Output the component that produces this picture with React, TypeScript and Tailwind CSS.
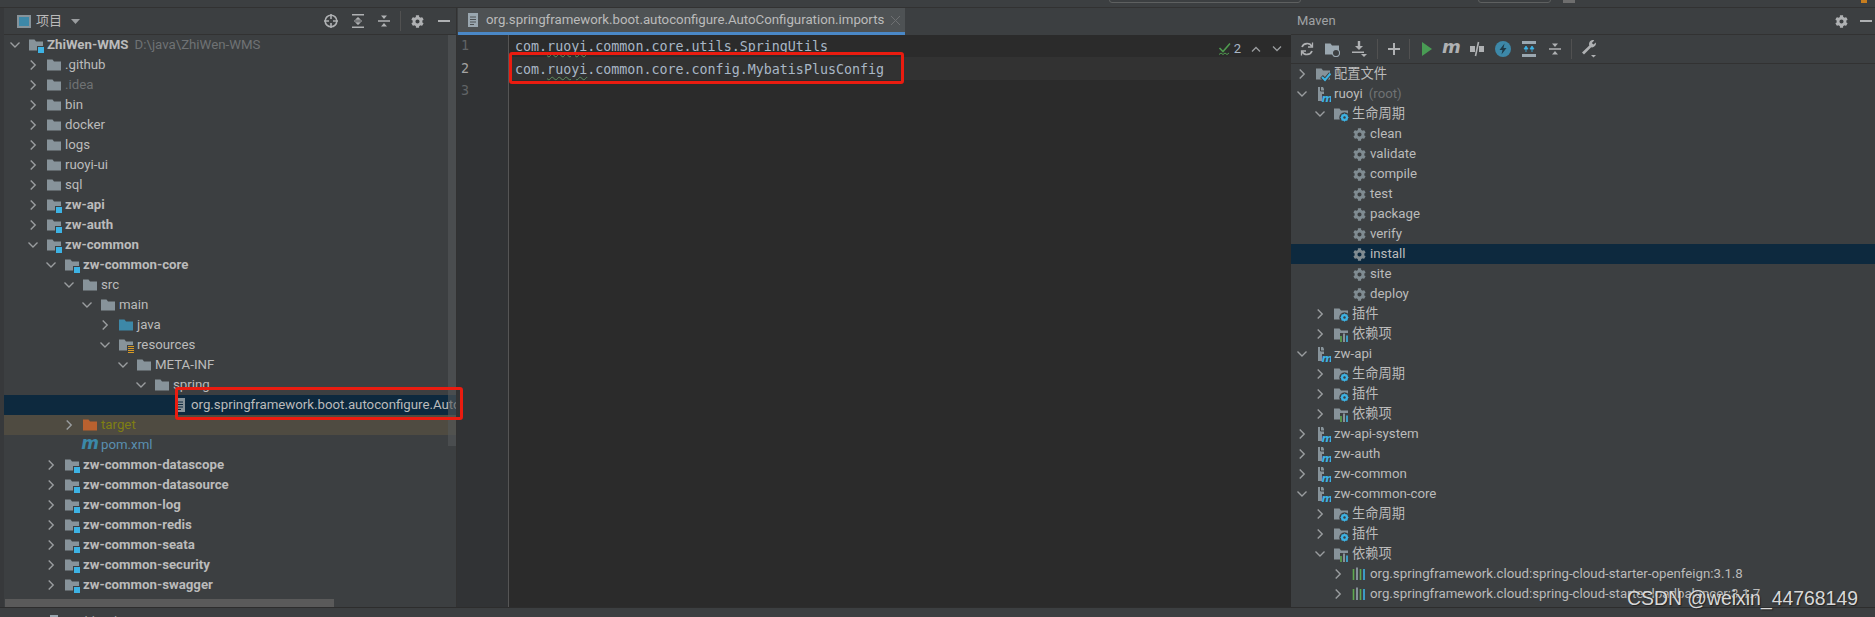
import React from "react";
import { FaCog } from "react-icons/fa";

const UI_FONT = "font-['Roboto','Noto_Sans_CJK_SC',sans-serif]";

type IconKind =
  | "folder" | "module" | "java" | "resources" | "target" | "file" | "pom"
  | "profiles" | "mvn" | "lifecycle" | "deps" | "task" | "lib";

type Row = {
  label: string;
  depth: number;
  icon: IconKind;
  open?: boolean;
  leaf?: boolean;
  bold?: boolean;
  hint?: string;
  tone?: string;
  rowBg?: string;
};

const projectRows: Row[] = [
  { label: "ZhiWen-WMS", depth: 0, icon: "module", open: true, bold: true, hint: "D:\\java\\ZhiWen-WMS" },
  { label: ".github", depth: 1, icon: "folder" },
  { label: ".idea", depth: 1, icon: "folder", tone: "text-[#6f7274]" },
  { label: "bin", depth: 1, icon: "folder" },
  { label: "docker", depth: 1, icon: "folder" },
  { label: "logs", depth: 1, icon: "folder" },
  { label: "ruoyi-ui", depth: 1, icon: "folder" },
  { label: "sql", depth: 1, icon: "folder" },
  { label: "zw-api", depth: 1, icon: "module", bold: true },
  { label: "zw-auth", depth: 1, icon: "module", bold: true },
  { label: "zw-common", depth: 1, icon: "module", open: true, bold: true },
  { label: "zw-common-core", depth: 2, icon: "module", open: true, bold: true },
  { label: "src", depth: 3, icon: "folder", open: true },
  { label: "main", depth: 4, icon: "folder", open: true },
  { label: "java", depth: 5, icon: "java" },
  { label: "resources", depth: 5, icon: "resources", open: true },
  { label: "META-INF", depth: 6, icon: "folder", open: true },
  { label: "spring", depth: 7, icon: "folder", open: true },
  { label: "org.springframework.boot.autoconfigure.AutoConfiguration.imports", depth: 8, icon: "file", leaf: true, rowBg: "bg-[#0d293e]" },
  { label: "target", depth: 3, icon: "target", tone: "text-[#7f7f13]", rowBg: "bg-[#4f4b41]" },
  { label: "pom.xml", depth: 3, icon: "pom", leaf: true, tone: "text-[#5a8fb0]" },
  { label: "zw-common-datascope", depth: 2, icon: "module", bold: true },
  { label: "zw-common-datasource", depth: 2, icon: "module", bold: true },
  { label: "zw-common-log", depth: 2, icon: "module", bold: true },
  { label: "zw-common-redis", depth: 2, icon: "module", bold: true },
  { label: "zw-common-seata", depth: 2, icon: "module", bold: true },
  { label: "zw-common-security", depth: 2, icon: "module", bold: true },
  { label: "zw-common-swagger", depth: 2, icon: "module", bold: true },
  { label: "pom.xml", depth: 2, icon: "pom", leaf: true, tone: "text-[#5a8fb0]" },
];

const task = (label: string, rowBg?: string): Row => ({ label, depth: 2, icon: "task", leaf: true, rowBg });

const mavenRows: Row[] = [
  { label: "配置文件", depth: 0, icon: "profiles" },
  { label: "ruoyi", depth: 0, icon: "mvn", open: true, hint: "(root)" },
  { label: "生命周期", depth: 1, icon: "lifecycle", open: true },
  task("clean"), task("validate"), task("compile"), task("test"), task("package"), task("verify"),
  task("install", "bg-[#0d293e]"), task("site"), task("deploy"),
  { label: "插件", depth: 1, icon: "lifecycle" },
  { label: "依赖项", depth: 1, icon: "deps" },
  { label: "zw-api", depth: 0, icon: "mvn", open: true },
  { label: "生命周期", depth: 1, icon: "lifecycle" },
  { label: "插件", depth: 1, icon: "lifecycle" },
  { label: "依赖项", depth: 1, icon: "deps" },
  { label: "zw-api-system", depth: 0, icon: "mvn" },
  { label: "zw-auth", depth: 0, icon: "mvn" },
  { label: "zw-common", depth: 0, icon: "mvn" },
  { label: "zw-common-core", depth: 0, icon: "mvn", open: true },
  { label: "生命周期", depth: 1, icon: "lifecycle" },
  { label: "插件", depth: 1, icon: "lifecycle" },
  { label: "依赖项", depth: 1, icon: "deps", open: true },
  { label: "org.springframework.cloud:spring-cloud-starter-openfeign:3.1.8", depth: 2, icon: "lib" },
  { label: "org.springframework.cloud:spring-cloud-starter-loadbalancer:3.1.7", depth: 2, icon: "lib" },
];

const FOLDER = "M1 2.5H6.5L8 4.5H15V13.5H1Z";

function Chevron({ open }: { open?: boolean }) {
  return (
    <svg width="12" height="12" viewBox="0 0 12 12" fill="none" stroke="#9a9d9f" strokeWidth="1.4" className="shrink-0">
      {open ? <path d="M1.5 3.5L6 8L10.5 3.5" /> : <path d="M3.7 1.5L8.2 6L3.7 10.5" />}
    </svg>
  );
}

function TreeIcon({ kind }: { kind: IconKind }) {
  if (kind === "task") return <FaCog size={13} className="text-[#7f8b91]" />;
  if (kind === "pom") {
    return <span className="font-['DejaVu_Sans',sans-serif] text-[17px] leading-none font-bold italic text-[#3b88a8] -mt-1">m</span>;
  }
  return (
    <svg width="16" height="16" viewBox="0 0 16 16">
      {kind === "folder" && <path d={FOLDER} fill="#87939a" />}
      {kind === "java" && <path d={FOLDER} fill="#3d88a8" />}
      {kind === "target" && <path d={FOLDER} fill="#b9612f" />}
      {kind === "module" && (
        <>
          <path d={FOLDER} fill="#87939a" />
          <rect x="9" y="9" width="8" height="8" fill="#3c3f41" />
          <rect x="10" y="10" width="6" height="6" fill="#3db3e4" />
        </>
      )}
      {kind === "resources" && (
        <>
          <path d={FOLDER} fill="#87939a" />
          <rect x="9" y="8" width="8" height="8" fill="#3c3f41" />
          <path d="M10 9.5H16M10 11.5H16M10 13.5H16M10 15.5H16" stroke="#d79a26" strokeWidth="1" />
        </>
      )}
      {kind === "file" && (
        <>
          <path d="M3 1H13V15H3Z" fill="#87939a" />
          <path d="M5 5H11M5 7.5H11M5 10H11M5 12.5H9" stroke="#0d293e" strokeWidth="1" />
        </>
      )}
      {kind === "profiles" && (
        <>
          <path d={FOLDER} fill="#87939a" />
          <path d="M6.5 10.5L10 14L15.5 7.5" fill="none" stroke="#3c3f41" strokeWidth="4" />
          <path d="M7 11L10 14L15.5 7.5" fill="none" stroke="#3db3e4" strokeWidth="2" />
        </>
      )}
      {kind === "lifecycle" && (
        <>
          <path d={FOLDER} fill="#87939a" />
          <circle cx="11.5" cy="11.5" r="5.2" fill="#3c3f41" />
          <circle cx="11.5" cy="11.5" r="2.6" fill="none" stroke="#3db3e4" strokeWidth="2" />
          <path d="M11.5 7.5V15.5M7.5 11.5H15.5M8.7 8.7L14.3 14.3M14.3 8.7L8.7 14.3" stroke="#3db3e4" strokeWidth="1.1" />
          <circle cx="11.5" cy="11.5" r="1.2" fill="#3c3f41" />
        </>
      )}
      {kind === "deps" && (
        <>
          <path d={FOLDER} fill="#87939a" />
          <rect x="7" y="7" width="10" height="9" fill="#3c3f41" />
          <path d="M8 10V16" stroke="#5ea84f" strokeWidth="1.6" />
          <path d="M11 7.5V16" stroke="#9aa7b0" strokeWidth="1.6" />
          <path d="M14 9.5V16" stroke="#3db3e4" strokeWidth="1.6" />
        </>
      )}
      {kind === "lib" && (
        <>
          <path d="M2.5 3V14" stroke="#5ea84f" strokeWidth="1.6" />
          <path d="M6 1.5V14" stroke="#9aa7b0" strokeWidth="1.6" />
          <path d="M9.5 3V14" stroke="#5ea84f" strokeWidth="1.6" />
          <path d="M13 3V14" stroke="#3db3e4" strokeWidth="1.6" />
        </>
      )}
      {kind === "mvn" && (
        <>
          <path d="M3 1H8L9 3V9H8V15H3Z" fill="#87939a" />
          <path d="M5.5 1V5H9" fill="none" stroke="#3c3f41" strokeWidth="1" />
          <rect x="7" y="8" width="10" height="8" fill="#3c3f41" />
          <text x="6.5" y="15.5" fontSize="11" fontWeight="700" fontStyle="italic" fill="#3db3e4" fontFamily="DejaVu Sans">m</text>
        </>
      )}
    </svg>
  );
}

function TreeRow({ row }: { row: Row }) {
  const tone = row.tone ?? "text-[#bbbbbb]";
  return (
    <div
      className={`h-5 shrink-0 flex items-center whitespace-nowrap text-[13.25px] ${row.rowBg ?? ""}`}
      style={{ paddingLeft: 5 + row.depth * 18 }}
    >
      <span className="w-3 shrink-0">{!row.leaf && row.icon !== "task" && <Chevron open={row.open} />}</span>
      <span className="w-4 h-4 ml-[7px] mr-[3px] shrink-0 flex items-center justify-center">
        <TreeIcon kind={row.icon} />
      </span>
      <span className={`${tone} ${row.bold ? "font-bold" : ""}`}>{row.label}</span>
      {row.hint && <span className="ml-[6px] text-[#6f7274]">{row.hint}</span>}
    </div>
  );
}

function ToolSep() {
  return <span className="block w-px h-[20px] bg-[#515151] shrink-0" />;
}

function Minus() {
  return <span className="block w-3 h-[2px] bg-[#afb1b3] shrink-0" />;
}

function ExpandIcon() {
  return (
    <svg width="14" height="14" viewBox="0 0 14 14" fill="#afb1b3">
      <path d="M1 0H13V1.5H1ZM1 12.5H13V14H1ZM7 3L10 5.8H4ZM7 11L4 8.2H10ZM3 6.4H11V7.6H3Z" />
    </svg>
  );
}

function CollapseIcon() {
  return (
    <svg width="14" height="14" viewBox="0 0 14 14" fill="#afb1b3">
      <path d="M1 6.3H13V7.7H1ZM7 5L4 1.5H10ZM7 9L10 12.5H4Z" />
    </svg>
  );
}

function ProjectHeader() {
  return (
    <div className="h-[27px] shrink-0 flex items-center border-b border-[#323232] pl-[13px] pr-[6px]">
      <span className="w-[14px] h-[13px] border-2 border-[#87939a] bg-[#3d88a8] shrink-0" />
      <span className="ml-[5px] text-[13px] text-[#bbbbbb]">项目</span>
      <svg width="9" height="5" viewBox="0 0 9 5" className="ml-[9px]" fill="#9a9d9f"><path d="M0 0H9L4.5 5Z" /></svg>
      <div className="ml-auto flex items-center">
        <svg width="14" height="14" viewBox="0 0 14 14" fill="none" stroke="#afb1b3" strokeWidth="1.6">
          <circle cx="7" cy="7" r="5.8" />
          <path d="M7 0V5M7 9V14M0 7H5M9 7H14" />
        </svg>
        <span className="ml-[13px] flex"><ExpandIcon /></span>
        <span className="ml-[12px] flex"><CollapseIcon /></span>
        <span className="ml-[9px]"><ToolSep /></span>
        <FaCog size={13} className="ml-[10px] text-[#afb1b3]" />
        <span className="ml-[14px]"><Minus /></span>
      </div>
    </div>
  );
}

function CodeLine({ n, active, children }: { n: number; active?: boolean; children?: React.ReactNode }) {
  return (
    <div className={`h-[22.4px] flex items-center ${active ? "bg-[#323232]" : ""}`}>
      <span className={`w-[52px] h-full flex items-center pl-[4px] shrink-0 bg-[#313335] border-r border-[#555555] ${active ? "text-[#a4a3a3]" : "text-[#606366]"}`}>
        {n}
      </span>
      <span className="pl-[6px] pt-[2px] text-[#a9b7c6] whitespace-pre">{children}</span>
    </div>
  );
}

function Ruoyi() {
  return <span className="underline decoration-wavy decoration-[#5f8f5f] decoration-1 underline-offset-2">ruoyi</span>;
}

function Editor() {
  return (
    <section className="w-[834px] shrink-0 flex flex-col bg-[#2b2b2b] relative">
      <div className="h-[27px] shrink-0 bg-[#3c3f41] flex pl-px">
        <div className="w-[447px] h-full flex items-center bg-[#4e5254] border-b-[3px] border-[#4a88c7]">
          <svg width="12" height="14" viewBox="0 0 12 14" className="ml-[9px] shrink-0">
            <path d="M1 0H11V14H1Z" fill="#9aa7b0" />
            <path d="M3 4H9M3 6.5H9M3 9H9M3 11.5H7" stroke="#4e5254" strokeWidth="1" />
          </svg>
          <span className="ml-[7px] text-[13.25px] text-[#bbbbbb] whitespace-nowrap">
            org.springframework.boot.autoconfigure.AutoConfiguration.imports
          </span>
          <svg width="9" height="9" viewBox="0 0 9 9" className="ml-[7px] shrink-0" stroke="#6e7072" strokeWidth="1"><path d="M0 0L9 9M9 0L0 9" /></svg>
        </div>
      </div>
      <div className="flex-1 relative font-['DejaVu_Sans_Mono',monospace] text-[13.33px]">
        <div className="absolute left-0 top-0 bottom-0 w-[52px] bg-[#313335] border-r border-[#555555]" />
        <div className="relative">
          <CodeLine n={1}>com.<Ruoyi />.common.core.utils.SpringUtils</CodeLine>
          <CodeLine n={2} active>com.<Ruoyi />.common.core.config.MybatisPlusConfig</CodeLine>
          <CodeLine n={3} />
        </div>
        <div className="absolute top-[4px] right-[9px] flex items-center text-[13px] text-[#a9b7c6] font-['Roboto',sans-serif]">
          <svg width="14" height="14" viewBox="0 0 14 14" fill="none" stroke="#4f9a4f" strokeWidth="1.6">
            <path d="M1.5 6L5 9.5L12 1.5" />
            <path d="M1 12.5L3 11L5 12.5L7 11L9 12.5L11 11" strokeWidth="1" />
          </svg>
          <span className="ml-[2px]">2</span>
          <svg width="10" height="6" viewBox="0 0 10 6" className="ml-[10px]" fill="none" stroke="#9a9d9f" strokeWidth="1.3"><path d="M1 5.5L5 1.5L9 5.5" /></svg>
          <svg width="10" height="6" viewBox="0 0 10 6" className="ml-[11px]" fill="none" stroke="#9a9d9f" strokeWidth="1.3"><path d="M1 .5L5 4.5L9 .5" /></svg>
        </div>
      </div>
    </section>
  );
}

function MavenToolbar() {
  return (
    <div className="h-[29px] shrink-0 flex items-center border-b border-[#323232] pl-[3px]">
      <span className="w-[25px] flex justify-center">
        <svg width="14" height="14" viewBox="0 0 14 14" fill="none" stroke="#afb1b3" strokeWidth="1.7">
          <path d="M12 4.5A5.5 5.5 0 0 0 2 5M2 9.5A5.5 5.5 0 0 0 12 9" />
          <path d="M12.5 .5V5H8M1.5 13.5V9H6" strokeWidth="1.3" />
        </svg>
      </span>
      <span className="w-[26px] flex justify-center">
        <svg width="16" height="16" viewBox="0 0 16 16">
          <path d={FOLDER} fill="#9aa7b0" />
          <circle cx="12" cy="12" r="3.6" fill="#3c3f41" stroke="#9aa7b0" strokeWidth="1.2" />
        </svg>
      </span>
      <span className="w-[27px] flex justify-center">
        <svg width="16" height="16" viewBox="0 0 16 16" fill="#afb1b3">
          <path d="M6.8 0H9.2V5H12L8 9L4 5H6.8ZM1 10.5H13V12H1Z" />
          <path d="M10 13H16L13 16Z" />
        </svg>
      </span>
      <span className="ml-[5px]"><ToolSep /></span>
      <span className="w-[31px] flex justify-center text-[#afb1b3]">
        <svg width="12" height="12" viewBox="0 0 12 12" fill="#afb1b3"><path d="M5 0H7V5H12V7H7V12H5V7H0V5H5Z" /></svg>
      </span>
      <ToolSep />
      <span className="w-[33px] flex justify-center">
        <svg width="12" height="14" viewBox="0 0 12 14" fill="#499c54"><path d="M1 0L11 7L1 14Z" /></svg>
      </span>
      <span className="w-[18px] -ml-px text-center font-['DejaVu_Sans',sans-serif] text-[18px] leading-none font-bold italic text-[#afb1b3] -mt-1">m</span>
      <span className="w-[34px] flex justify-center">
        <svg width="16" height="16" viewBox="0 0 16 16" fill="#afb1b3">
          <rect x="1" y="5" width="5" height="6" />
          <rect x="10" y="5" width="5" height="6" />
          <path d="M6.5 15L9.5 1" stroke="#afb1b3" strokeWidth="1.6" />
        </svg>
      </span>
      <span className="w-[18px] flex justify-center">
        <svg width="16" height="16" viewBox="0 0 16 16" className="shrink-0">
          <circle cx="8" cy="8" r="8" fill="#3d88a8" />
          <path d="M9.5 2.5L4.5 9H7.5L6.5 13.5L11.5 7H8.5Z" fill="#1f3a47" />
        </svg>
      </span>
      <span className="w-[34px] flex justify-center">
        <svg width="14" height="16" viewBox="0 0 14 16">
          <path d="M0 0H14V3H0ZM0 13H14V16H0Z" fill="#9aa7b0" />
          <path d="M4 5L6 8H2ZM4 8V11M10 5L12 8H8ZM10 8V11" fill="#3db3e4" stroke="#3db3e4" strokeWidth=".8" />
        </svg>
      </span>
      <span className="w-[18px] flex justify-center"><CollapseIcon /></span>
      <span className="ml-[7px]"><ToolSep /></span>
      <span className="ml-[9px] flex">
        <svg width="16" height="18" viewBox="0 0 16 18" fill="#afb1b3">
          <path d="M12.5 0A4 4 0 0 0 8.3 5.4L1 12.5L3 14.5L10.2 7.3A4 4 0 0 0 14.8 2.4L12.5 4.6L10.8 3L13.2 .6Z" />
          <path d="M10 15H15L12.5 17.5Z" />
        </svg>
      </span>
    </div>
  );
}

export default function App() {
  return (
    <div className={`relative w-[1875px] h-[617px] overflow-hidden flex flex-col bg-[#3c3f41] ${UI_FONT}`}>
      {/* cut off window title row */}
      <div className="h-2 shrink-0 relative border-b border-[#323232] overflow-hidden">
        <div className="absolute left-[1109px] -top-4 w-[192px] h-[19px] border border-[#5e6060] rounded-[3px]" />
        <div className="absolute left-[1478px] -top-4 w-[73px] h-[19px] border border-[#5e6060] rounded-[3px]" />
        <div className="absolute left-[1563px] -top-4 w-3 h-[19px] bg-[#6e6e6e]" />
        <div className="absolute left-[1861px] -top-4 w-[6px] h-[19px] bg-[#c77d1e]" />
      </div>

      <div className="flex-1 min-h-0 flex">
        <div className="w-1 shrink-0 bg-[#37393b]" />

        <aside className="w-[453px] shrink-0 flex flex-col relative overflow-hidden border-r border-[#323232]">
          <ProjectHeader />
          <div className="flex-1 min-h-0 overflow-hidden flex flex-col">
            {projectRows.map((row, i) => <TreeRow key={i} row={row} />)}
          </div>
          <div className="absolute right-0 top-[27px] w-2 h-[411px] bg-[#53565899]" />
          <div className="absolute left-px bottom-0 w-[329px] h-2 bg-[#5a5a5a]" />
        </aside>

        <Editor />

        <aside className="flex-1 min-w-0 flex flex-col overflow-hidden">
          <div className="h-[27px] shrink-0 flex items-center border-b border-[#323232] pl-[6px] pr-[3px]">
            <span className="text-[13px] text-[#a0a3a5]">Maven</span>
            <FaCog size={13} className="ml-auto text-[#afb1b3]" />
            <span className="ml-[12px]"><Minus /></span>
          </div>
          <MavenToolbar />
          <div className="flex-1 min-h-0 overflow-hidden flex flex-col">
            {mavenRows.map((row, i) => <TreeRow key={i} row={row} />)}
          </div>
        </aside>
      </div>

      <div className="h-[10px] shrink-0 border-t border-[#2d2d2d] bg-[#3c3f41] overflow-hidden flex pl-[50px] pt-[7px] gap-2 text-[13px] leading-[14px] text-[#9a9d9f]">
        <span className="w-2 h-2 bg-[#9aa7b0]" />
        <span>Build Utilities</span>
      </div>

      {/* red annotation boxes */}
      <div className="absolute left-[175px] top-[387px] w-[288px] h-[33px] border-[3px] border-[#ea1c10] rounded-[3px]" />
      <div className="absolute left-[509px] top-[52px] w-[395px] h-[32px] border-[3px] border-[#ea1c10] rounded-[3px]" />

      {/* watermark */}
      <span className="absolute left-[1627px] top-[584px] font-['Liberation_Sans',sans-serif] text-[19.4px] leading-7 text-[#d8d8d8] whitespace-nowrap [text-shadow:1px_1px_1px_#222222]">
        CSDN @weixin_44768149
      </span>
    </div>
  );
}
